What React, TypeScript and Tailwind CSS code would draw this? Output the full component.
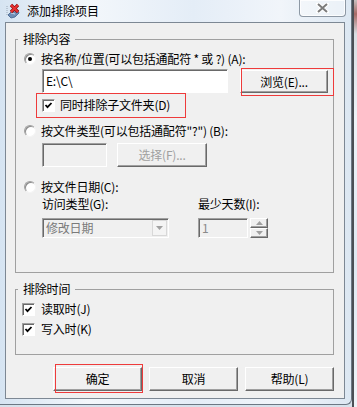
import type { ReactNode } from "react";

const sunken =
  "border border-t-[#a0a0a0] border-l-[#a0a0a0] border-r-white border-b-white shadow-[inset_1px_1px_0_#696969]";
const raised =
  "border border-t-white border-l-white border-r-[#696969] border-b-[#696969] shadow-[inset_-1px_-1px_0_#a0a0a0]";

const Radio = ({ checked }: { checked?: boolean }) => (
  <span className="flex h-[12px] w-[12px] shrink-0 items-center justify-center rounded-full border border-t-[#a0a0a0] border-l-[#a0a0a0] border-r-[#f4f4f4] border-b-[#f4f4f4] bg-white shadow-[inset_1px_1px_0_#8a8a8a]">
    {checked && <span className="h-[4px] w-[4px] rounded-full bg-black" />}
  </span>
);

const Check = () => (
  <span
    className={`flex h-[13px] w-[13px] shrink-0 items-center justify-center bg-white ${sunken}`}
  >
    <svg width="9" height="9" viewBox="0 0 9 9">
      <polyline points="1.5,4 3.5,6.2 7.5,2" fill="none" stroke="#000" strokeWidth="1.8" />
    </svg>
  </span>
);

const Btn = ({
  children,
  className = "",
  disabled,
}: {
  children: ReactNode;
  className?: string;
  disabled?: boolean;
}) => (
  <div
    className={`flex items-center justify-center bg-[#f0f0f0] ${raised} ${
      disabled ? "text-[#a0a0a0]" : "text-black"
    } ${className}`}
  >
    {children}
  </div>
);

const Group = ({
  title,
  className,
  children,
}: {
  title: string;
  className: string;
  children: ReactNode;
}) => (
  <fieldset className={`ml-[9px] w-[319px] border border-[#a0a0a0] ${className}`}>
    <legend className="ml-[2px] px-[5px] text-[12px] leading-[14px]">{title}</legend>
    {children}
  </fieldset>
);

const Triangle = ({ up }: { up?: boolean }) => (
  <svg width="7" height="4" viewBox="0 0 7 4">
    <polygon points={up ? "3.5,0 7,4 0,4" : "0,0 7,0 3.5,4"} fill="#a0a0a0" />
  </svg>
);

const TitleIcon = () => (
  <svg width="16" height="16" viewBox="0 0 16 16">
    <path d="M1 3 v10" stroke="#9aa8b8" strokeDasharray="1 1" />
    <path d="M2 12 L6 8 L9 9 L12 7 L13 10 L9 14 L5 15 Z" fill="#6f8db5" stroke="#3f5f8a" strokeWidth="0.8" />
    <path d="M5 10 L9 11" stroke="#c8d8ec" strokeWidth="1" />
    <path d="M5 2 L12 9 M12 2 L5 9" stroke="#8a1010" strokeWidth="3.2" />
    <path d="M5 2 L12 9 M12 2 L5 9" stroke="#e83030" strokeWidth="2" />
  </svg>
);

export default function App() {
  return (
    <div className="flex h-[407px] w-[357px] overflow-hidden bg-[#d7e2ec] font-['Noto_Sans_CJK_SC','Liberation_Sans',sans-serif] text-[12px] leading-[16px] text-black">
      {/* window */}
      <div className="flex h-[405px] w-[352px] flex-col rounded-br-[6px] border-r border-b border-[#6c7884] bg-[linear-gradient(90deg,#d6e4f2,#f3f7fb_25%,#e4edf7_55%,#f1f5fa_80%,#dce7f2)]">
        {/* title bar */}
        <div className="flex h-[22px] shrink-0 items-start">
          <div className="ml-[6px] mt-[3px]">
            <TitleIcon />
          </div>
          <span className="ml-[5px] mt-[3px] text-[12px] leading-[16px]">添加排除项目</span>
          <div className="ml-auto mr-[5px] flex h-[17px] w-[47px] items-center justify-center rounded-b-[4px] border border-t-0 border-[#8d98a4] bg-white/40 shadow-[inset_0_0_0_1px_rgba(255,255,255,0.8)]">
            <svg width="13" height="10" viewBox="0 0 13 10">
              <path d="M2 1 L11 9 M11 1 L2 9" stroke="#fff" strokeWidth="4" strokeLinecap="round" />
              <path d="M2 1 L11 9 M11 1 L2 9" stroke="#7c7c7c" strokeWidth="2" />
            </svg>
          </div>
        </div>

        {/* client */}
        <div className="ml-[5px] flex h-[377px] w-[340px] flex-col border border-[#7d8894] bg-[#f0f0f0] tracking-[-0.2px]">
          <Group title="排除内容" className="mt-[9px] h-[241px]">
            <div className="ml-[8px] mt-[5px] flex h-[16px] items-center gap-[5px]">
              <Radio checked />
              <span>按名称/位置(可以包括通配符 * 或 ?) (A):</span>
            </div>
            <div className="ml-[26px] mt-[2px] flex items-start">
              <div className={`flex h-[24px] w-[186px] items-center bg-white pl-[3px] ${sunken}`}>
                E:\C\
              </div>
              <div className="relative ml-[12px] mt-[1px]">
                <Btn className="h-[23px] w-[88px]">浏览(E)...</Btn>
                <div className="absolute left-[1px] top-[-2px] h-[28px] w-[93px] border border-[#ee3b3b]" />
              </div>
            </div>
            <div className="relative ml-[26px] mt-[4px] flex h-[16px] items-center gap-[5px]">
              <Check />
              <span>同时排除子文件夹(D)</span>
              <div className="absolute left-[-6px] top-[-4px] h-[25px] w-[150px] border border-[#ee3b3b]" />
            </div>
            <div className="ml-[8px] mt-[10px] flex h-[16px] items-center gap-[5px]">
              <Radio />
              <span>按文件类型(可以包括通配符"?") (B):</span>
            </div>
            <div className="ml-[26px] mt-[4px] flex">
              <div className={`h-[24px] w-[65px] bg-[#f0f0f0] ${sunken}`} />
              <Btn disabled className="ml-[10px] h-[24px] w-[90px]">
                选择(F)...
              </Btn>
            </div>
            <div className="ml-[8px] mt-[12px] flex h-[16px] items-center gap-[5px]">
              <Radio />
              <span>按文件日期(C):</span>
            </div>
            <div className="ml-[26px] mt-[1px] flex h-[16px]">
              <span className="w-[156px]">访问类型(G):</span>
              <span>最少天数(I):</span>
            </div>
            <div className="ml-[26px] mt-[6px] flex">
              <div className={`flex h-[20px] w-[127px] items-center justify-between bg-[#f0f0f0] pl-[3px] pr-[1px] text-[#7a7a7a] ${sunken}`}>
                <span>修改日期</span>
                <div className="flex h-[16px] w-[15px] items-center justify-center border border-[#d8d8d8] bg-[#f4f4f4]">
                  <Triangle />
                </div>
              </div>
              <div className={`ml-[29px] flex h-[20px] w-[50px] items-center bg-[#f0f0f0] pl-[3px] text-[#8a8a8a] ${sunken}`}>
                1
              </div>
              <div className="ml-[2px] flex w-[18px] flex-col">
                <Btn className="h-[10px] w-[18px]">
                  <Triangle up />
                </Btn>
                <Btn className="h-[10px] w-[18px]">
                  <Triangle />
                </Btn>
              </div>
            </div>
          </Group>

          <Group title="排除时间" className="mt-[9px] h-[73px]">
            <div className="ml-[6px] mt-[5px] flex h-[16px] items-center gap-[6px]">
              <Check />
              <span>读取时(J)</span>
            </div>
            <div className="ml-[6px] mt-[4px] flex h-[16px] items-center gap-[6px]">
              <Check />
              <span>写入时(K)</span>
            </div>
          </Group>

          <div className="ml-[47px] mt-[12px] flex gap-[7px]">
            <div className="relative">
              <Btn className="h-[24px] w-[89px]">确定</Btn>
              <div className="absolute left-[2px] top-[-3px] h-[29px] w-[88px] border border-[#ee3b3b]" />
            </div>
            <Btn className="h-[24px] w-[89px]">取消</Btn>
            <Btn className="h-[24px] w-[89px]">帮助(L)</Btn>
          </div>
        </div>
      </div>

      {/* window behind, right edge */}
      <div className="h-full flex-1 border-l-2 border-[#4a4f55] bg-[linear-gradient(to_bottom,#c8c0bf_0px,#a86a66_14px,#d9dde2_34px,#eef3f8_120px,#dfe8f1_260px,#eef3f8_400px)]" />
    </div>
  );
}
